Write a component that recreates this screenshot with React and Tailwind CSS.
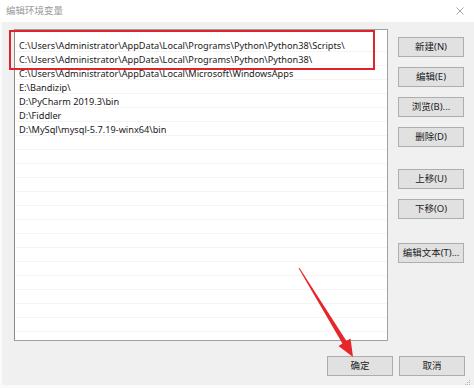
import React from 'react';

const paths = [
    'C:\\Users\\Administrator\\AppData\\Local\\Programs\\Python\\Python38\\Scripts\\',
    'C:\\Users\\Administrator\\AppData\\Local\\Programs\\Python\\Python38\\',
    'C:\\Users\\Administrator\\AppData\\Local\\Microsoft\\WindowsApps',
    'E:\\Bandizip\\',
    'D:\\PyCharm 2019.3\\bin',
    'D:\\Fiddler',
    'D:\\MySql\\mysql-5.7.19-winx64\\bin',
];

const rows = [...paths, ...Array(16).fill('')];

const font = { fontFamily: '"Noto Sans", "Noto Sans CJK SC", sans-serif' };

const WinButton = ({ label, className = '' }) => (
    <button
        className={`h-[20px] w-[66px] bg-[#e1e1e1] border border-[#adadad] text-[9.5px] text-[#222] leading-none ${className}`}
    >
        {label}
    </button>
);

const App = () => {
    return (
        <div
            className="relative w-[474px] h-[388px] overflow-hidden bg-[#fafafa] flex flex-col"
            style={font}
        >
            {/* title bar */}
            <div className="h-[22px] bg-white flex items-center justify-between px-[6px] shrink-0">
                <span className="text-[9.5px] text-[#9a9a9a]">编辑环境变量</span>
                <svg width="8" height="8" viewBox="0 0 8 8" className="mr-[4px]">
                    <path d="M0.5 0.5 L7.5 7.5 M7.5 0.5 L0.5 7.5" stroke="#9a9a9a" strokeWidth="0.9" />
                </svg>
            </div>

            {/* body */}
            <div className="flex-1 ml-[2px] mb-[3px] bg-[#f0f0f0] flex flex-col">
                <div className="flex pt-[7px] pl-[12px]">
                    {/* list */}
                    <div className="w-[374px] h-[312px] bg-white border border-[#a0a0a0] border-l-[#8a8a8a] pt-[8px] overflow-hidden">
                        {rows.map((p, i) => (
                            <div
                                key={i}
                                className="h-[14px] pl-[4px] border-b border-[#f4f4f4] text-[9.2px] leading-[15px] text-[#1a1a1a] whitespace-nowrap"
                            >
                                {p}
                            </div>
                        ))}
                    </div>

                    {/* side buttons */}
                    <div className="ml-[10px] pt-[8px] flex flex-col">
                        <WinButton label="新建(N)" />
                        <WinButton label="编辑(E)" className="mt-[10px]" />
                        <WinButton label="浏览(B)..." className="mt-[10px]" />
                        <WinButton label="删除(D)" className="mt-[10px]" />
                        <WinButton label="上移(U)" className="mt-[22px]" />
                        <WinButton label="下移(O)" className="mt-[10px]" />
                        <WinButton label="编辑文本(T)..." className="mt-[24px]" />
                    </div>
                </div>

                {/* bottom buttons */}
                <div className="flex justify-end gap-[6px] mt-[15px] pr-[9px]">
                    <WinButton label="确定" className="w-[65px]" />
                    <WinButton label="取消" className="w-[65px]" />
                </div>
            </div>

            {/* resize grip */}
            <svg className="absolute right-[3px] bottom-[2px]" width="8" height="8" viewBox="0 0 8 8">
                <rect x="6" y="2" width="1" height="1" fill="#b5b5b5" />
                <rect x="4" y="4" width="1" height="1" fill="#b5b5b5" />
                <rect x="6" y="4" width="1" height="1" fill="#b5b5b5" />
                <rect x="2" y="6" width="1" height="1" fill="#b5b5b5" />
                <rect x="4" y="6" width="1" height="1" fill="#b5b5b5" />
                <rect x="6" y="6" width="1" height="1" fill="#b5b5b5" />
            </svg>

            {/* red highlight box */}
            <div className="absolute left-[9px] top-[30px] w-[366px] h-[40px] border-2 border-[#e0242c]" />

            {/* red arrow */}
            <svg className="absolute left-0 top-0 pointer-events-none" width="474" height="388">
                <polygon points="298.6,268.3 299.4,267.7 347.6,342.8 343.4,345.2" fill="#e5262b" />
                <polygon points="353,357 338.5,346 350.5,338.5" fill="#e5262b" />
            </svg>
        </div>
    );
};

export default App;
